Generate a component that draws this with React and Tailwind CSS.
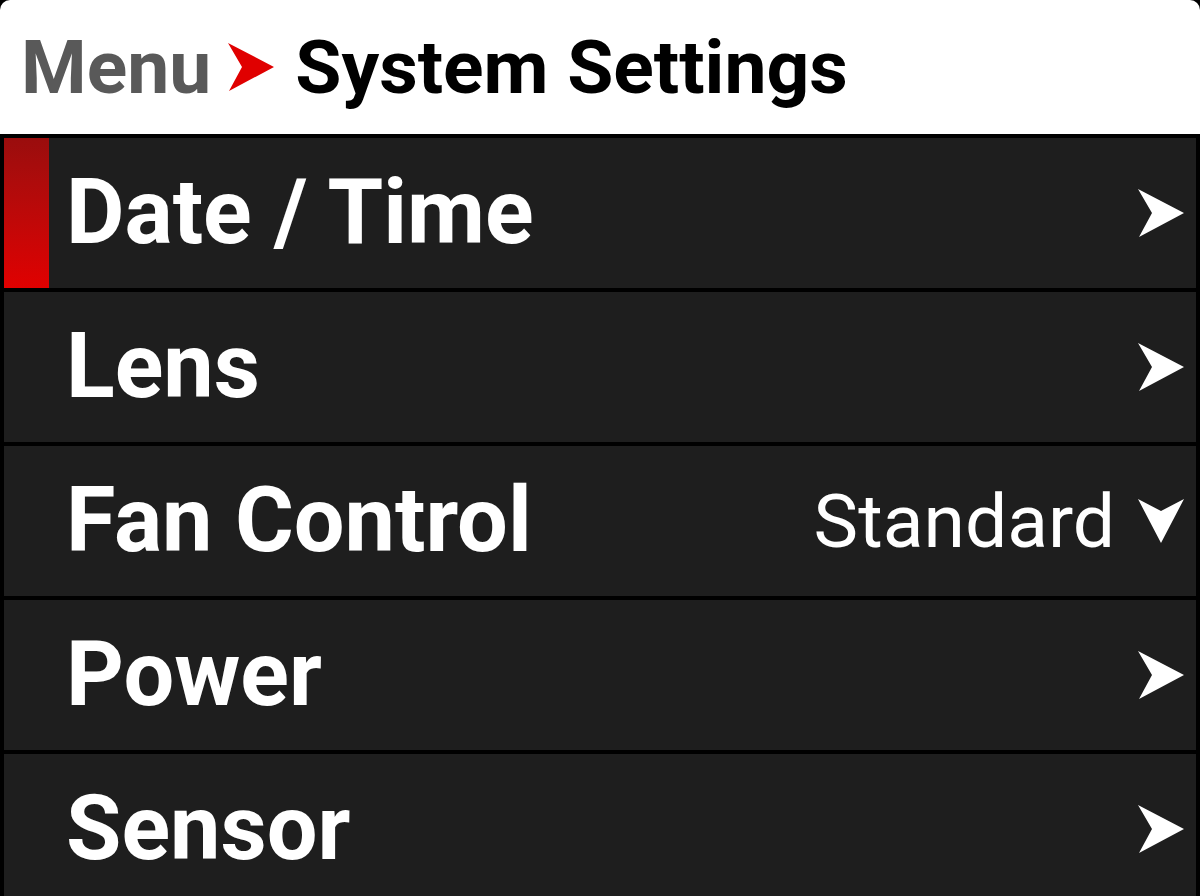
import React from "react";

const rows = [
  { label: "Date / Time", selected: true },
  { label: "Lens" },
  { label: "Fan Control", value: "Standard", dropdown: true },
  { label: "Power" },
  { label: "Sensor" },
];

const ArrowRight = ({ className }) => (
  <svg viewBox="0 0 48 50" className={className}>
    <path d="M1 1 L47 25 L2 49 L15 25 Z" fill="currentColor" />
  </svg>
);

const ArrowDown = ({ className }) => (
  <svg viewBox="0 0 48 46" className={className}>
    <path d="M1 1 L24 13 L47 1 L24 45 Z" fill="currentColor" />
  </svg>
);

const App = () => {
  return (
    <div
      className="w-[1200px] h-[896px] bg-black overflow-hidden"
      style={{ fontFamily: "Roboto, 'Liberation Sans', sans-serif" }}
    >
      {/* Breadcrumb header */}
      <header className="h-[134px] bg-white rounded-t-[10px] flex items-center pl-[21px]">
        <span className="text-[75px] font-bold text-[#595959] leading-none">Menu</span>
        <ArrowRight className="w-[48px] h-[50px] text-[#e00000] ml-[16px] mr-[20px]" />
        <span className="text-[75px] font-bold text-black leading-none">System Settings</span>
      </header>

      {/* Settings list */}
      <div className="flex flex-col gap-[4px] pt-[4px] px-[4px]">
        {rows.map((row) => (
          <div key={row.label} className="h-[150px] bg-[#1e1e1e] flex items-stretch shrink-0">
            <div
              className={`w-[45px] shrink-0 ${row.selected ? "bg-gradient-to-b from-[#9a0d0d] to-[#e00000]" : ""}`}
            />
            <div className="flex-1 flex items-center pl-[17px] pr-[11px]">
              <span className="text-[90px] font-bold text-white leading-none flex-1">{row.label}</span>
              {row.value && (
                <span className="text-[75px] text-white leading-none mr-[22px]">{row.value}</span>
              )}
              {row.dropdown ? (
                <ArrowDown className="w-[48px] h-[46px] text-white" />
              ) : (
                <ArrowRight className="w-[48px] h-[50px] text-white" />
              )}
            </div>
          </div>
        ))}
      </div>
    </div>
  );
};

export default App;
